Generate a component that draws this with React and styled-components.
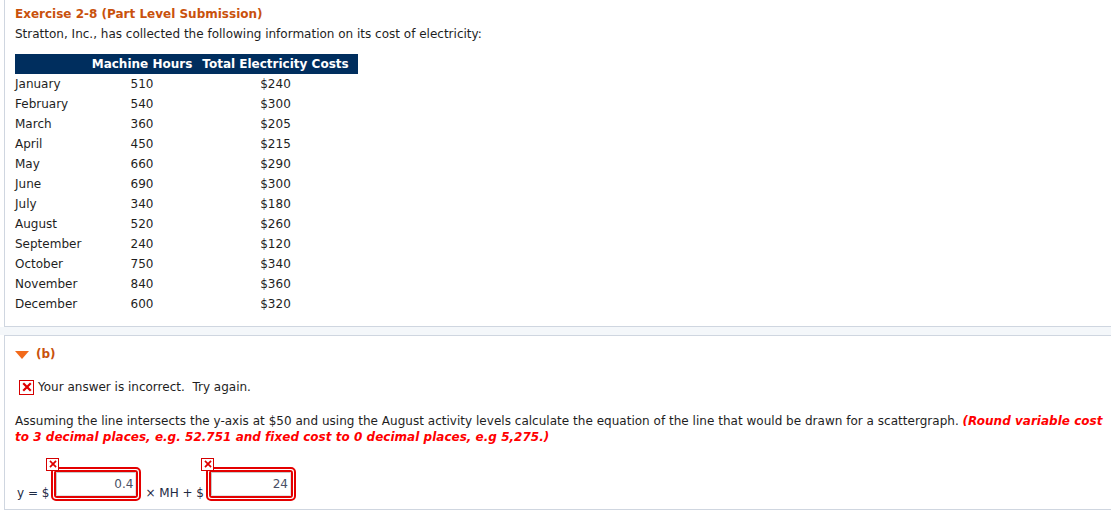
import React from "react";
import styled, { createGlobalStyle } from "styled-components";

const Global = createGlobalStyle`
  html, body { margin: 0; padding: 0; background: #fff; }
  body { font-family: "DejaVu Sans", Verdana, sans-serif; font-size: 12px; color: #1e1e1e; }
`;

const Page = styled.div`
  width: 1111px;
  height: 515px;
  overflow: hidden;
  padding-left: 4px;
  box-sizing: border-box;
  display: flex;
  flex-direction: column;
`;

const Panel = styled.section`
  background: #fff;
  border-left: 1px solid #cfd6e0;
  border-bottom: 1px solid #cfd6e0;
  border-top: ${(p) => (p.$top ? "1px solid #cfd6e0" : "none")};
  padding: ${(p) => p.$pad};
  box-sizing: border-box;
  height: ${(p) => p.$h}px;
`;

const Gap = styled.div`
  height: 8px;
  background: #f4f7fa;
  margin-left: -4px;
`;

const Title = styled.h2`
  margin: 0;
  font-size: 12px;
  font-weight: bold;
  color: #c9510c;
  line-height: 16px;
`;

const Intro = styled.p`
  margin: 4px 0 0;
  line-height: 16px;
`;

const Table = styled.table`
  border-collapse: collapse;
  table-layout: fixed;
  margin-top: 12px;
  width: 343px;
  line-height: 16px;
`;

const Th = styled.th`
  background: #002e5e;
  color: #fff;
  font-weight: bold;
  height: 20px;
  padding: 0;
  text-align: center;
  width: ${(p) => p.$w}px;
  white-space: nowrap;
`;

const Td = styled.td`
  height: 20px;
  padding: 0;
  text-align: ${(p) => p.$align || "center"};
`;

const PartHeader = styled.div`
  display: flex;
  align-items: center;
  gap: 7px;
  color: #c9510c;
  font-weight: bold;
  line-height: 16px;
  margin-top: -1px;
`;

const Triangle = styled.span`
  width: 0;
  height: 0;
  border-left: 7px solid transparent;
  border-right: 7px solid transparent;
  border-top: 8px solid #f26a1b;
  margin-top: 2px;
`;

const Feedback = styled.div`
  display: flex;
  align-items: center;
  gap: 4px;
  margin: 17px 0 0 4px;
  line-height: 16px;
`;

const XBox = styled.span`
  box-sizing: border-box;
  width: ${(p) => p.$s}px;
  height: ${(p) => p.$s}px;
  border: 1px solid #d40000;
  background: #fff;
  display: inline-flex;
  align-items: center;
  justify-content: center;
  flex: none;
`;

const Question = styled.p`
  margin: 18px 0 0;
  line-height: 16px;
  width: 1094px;
  letter-spacing: 0.02px;
`;

const Hint = styled.em`
  color: #ff0000;
  font-weight: bold;
`;

const Equation = styled.div`
  display: flex;
  align-items: flex-end;
  margin: 22px 0 0 2px;
  line-height: 16px;
  color: #1e2a44;
`;

const Label = styled.span`
  white-space: pre;
`;

const Field = styled.span`
  position: relative;
  display: inline-block;
  margin: 0 ${(p) => p.$mr || 0}px 0 2px;
`;

const Outer = styled.span`
  display: block;
  border: 2px solid #e40000;
  border-radius: 5px;
  padding: 1px;
  background: #fff;
`;

const Inner = styled.span`
  display: block;
  border: 2px solid #e40000;
  border-radius: 3px;
`;

const Input = styled.span`
  display: block;
  box-sizing: border-box;
  width: 80px;
  height: 24px;
  border: 1px solid #c8c8c8;
  border-right-color: #e2e2e2;
  border-bottom-color: #e2e2e2;
  text-align: right;
  padding: 3px 2px 0 0;
  color: #4a4f66;
  font-size: 12px;
  line-height: 16px;
`;

const Badge = styled.span`
  position: absolute;
  left: -5px;
  top: -11px;
`;

const X = ({ s = 15, f = 10 }) => (
  <XBox $s={s}>
    <svg width={f} height={f} viewBox="0 0 10 10">
      <path d="M2 2 L8 8 M8 2 L2 8" stroke="#e00000" strokeWidth="2.2" strokeLinecap="square" />
    </svg>
  </XBox>
);

const rows = [
  ["January", 510, 240],
  ["February", 540, 300],
  ["March", 360, 205],
  ["April", 450, 215],
  ["May", 660, 290],
  ["June", 690, 300],
  ["July", 340, 180],
  ["August", 520, 260],
  ["September", 240, 120],
  ["October", 750, 340],
  ["November", 840, 360],
  ["December", 600, 320],
];

const AnswerField = ({ value, mr }) => (
  <Field $mr={mr}>
    <Outer>
      <Inner>
        <Input>{value}</Input>
      </Inner>
    </Outer>
    <Badge>
      <X s={13} f={8} />
    </Badge>
  </Field>
);

export default function App() {
  return (
    <>
      <Global />
      <Page>
        <Panel $pad="6px 0 0 10px" $h={327}>
          <Title>Exercise 2-8 (Part Level Submission)</Title>
          <Intro>Stratton, Inc., has collected the following information on its cost of electricity:</Intro>
          <Table>
            <thead>
              <tr>
                <Th $w={76} />
                <Th $w={102}>Machine Hours</Th>
                <Th $w={165}>Total Electricity Costs</Th>
              </tr>
            </thead>
            <tbody>
              {rows.map(([m, h, c]) => (
                <tr key={m}>
                  <Td $align="left">{m}</Td>
                  <Td>{h}</Td>
                  <Td>${c}</Td>
                </tr>
              ))}
            </tbody>
          </Table>
        </Panel>
        <Gap />
        <Panel $top $pad="11px 0 0 10px" $h={175}>
          <PartHeader>
            <Triangle />
            (b)
          </PartHeader>
          <Feedback>
            <X />
            Your answer is incorrect.&nbsp; Try again.
          </Feedback>
          <Question>
            Assuming the line intersects the y-axis at $50 and using the August activity levels calculate the equation of the line that would be drawn for a scattergraph.{" "}
            <Hint>(Round variable cost to 3 decimal places, e.g. 52.751 and fixed cost to 0 decimal places, e.g 5,275.)</Hint>
          </Question>
          <Equation>
            <Label>y = $</Label>
            <AnswerField value="0.4" mr={4} />
            <Label>× MH + $</Label>
            <AnswerField value="24" />
          </Equation>
        </Panel>
      </Page>
    </>
  );
}
